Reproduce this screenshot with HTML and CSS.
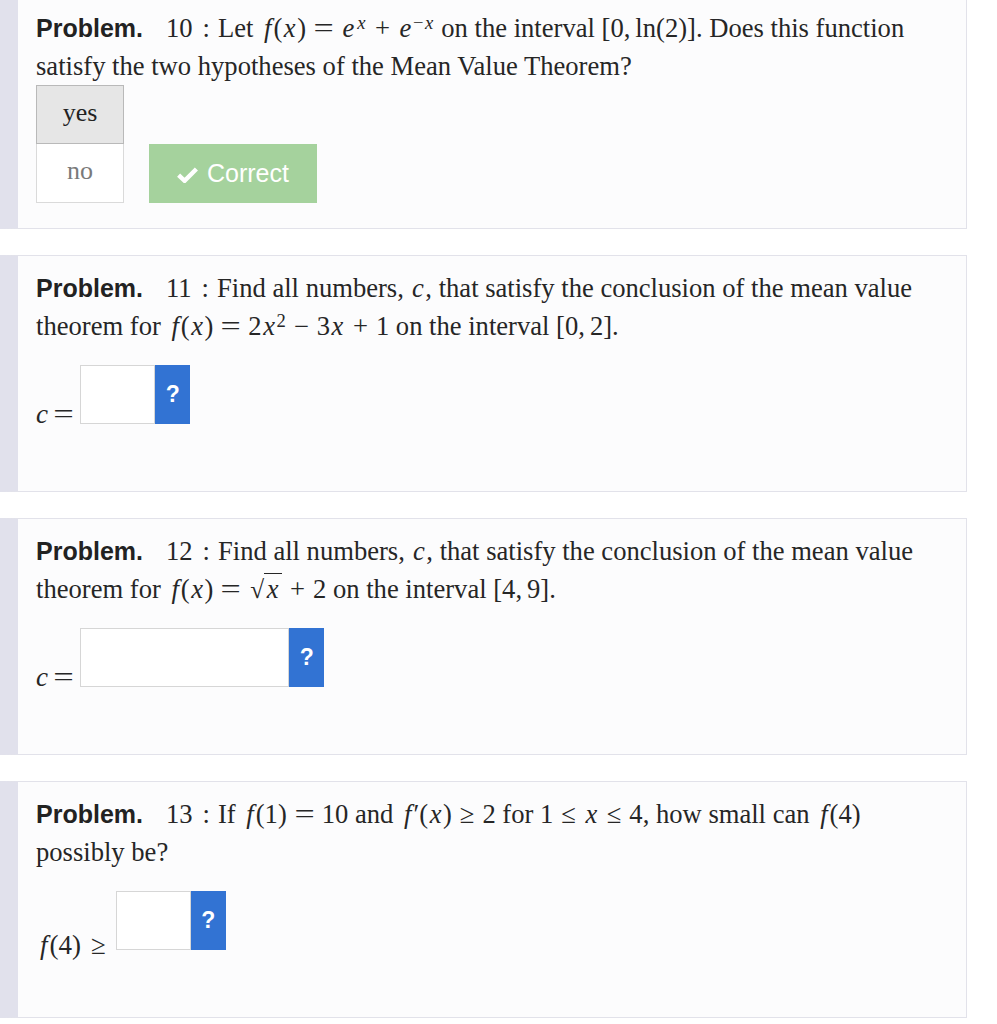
FILE: index.html
```html
<!DOCTYPE html>
<html lang="en">
<head>
<meta charset="utf-8">
<title>Mean Value Theorem problems</title>
<link rel="stylesheet" href="styles.css">
</head>
<body>
<div class="list">
  <section class="card card-first">
    <p class="question"><span class="label">Problem.</span><span class="num">10</span><span class="colon">:</span>Let <i class="f">f</i>(<i>x</i>)<span class="rel eq">=</span><i>e</i><sup><i>x</i></sup><span class="bin">+</span><i>e</i><sup>−<i>x</i></sup> on the interval [0,<span class="thin"></span>ln(2)]. Does this function<br>satisfy the two hypotheses of the Mean Value Theorem?</p>
    <div class="answer answer-choice">
      <div class="choices">
        <div class="choice choice-selected">yes</div>
        <div class="choice">no</div>
      </div>
      <div class="correct">
        <svg class="check" width="21" height="16" viewBox="0 0 21 16" aria-hidden="true"><path d="M1.6 8.2 L7.6 13.8 L19.4 2" fill="none" stroke="#fff" stroke-width="4.4"/></svg>
        <span>Correct</span>
      </div>
    </div>
  </section>

  <section class="card">
    <p class="question"><span class="label">Problem.</span><span class="num">11</span><span class="colon">:</span>Find all numbers, <i>c</i>, that satisfy the conclusion of the mean value<br>theorem for <i class="f">f</i>(<i>x</i>)<span class="rel eq">=</span>2<i>x</i><sup>2</sup><span class="bin">−</span>3<i>x</i><span class="bin">+</span>1 on the interval [0,<span class="thin"></span>2].</p>
    <div class="answer">
      <div class="ans-label"><i class="c">c</i><span class="rel-r eq">=</span></div>
      <div class="input"></div>
      <div class="help">?</div>
    </div>
  </section>

  <section class="card">
    <p class="question"><span class="label">Problem.</span><span class="num">12</span><span class="colon">:</span>Find all numbers, <i>c</i>, that satisfy the conclusion of the mean value<br>theorem for <i class="f">f</i>(<i>x</i>)<span class="rel eq">=</span><span class="sqrt"><span class="radical">√</span><span class="radicand"><i>x</i></span></span><span class="bin">+</span>2 on the interval [4,<span class="thin"></span>9].</p>
    <div class="answer">
      <div class="ans-label"><i class="c">c</i><span class="rel-r eq">=</span></div>
      <div class="input input-wide"></div>
      <div class="help">?</div>
    </div>
  </section>

  <section class="card">
    <p class="question"><span class="label">Problem.</span><span class="num">13</span><span class="colon">:</span>If <i class="f">f</i>(1)<span class="rel eq">=</span>10 and <i class="f">f</i>′(<i>x</i>)<span class="rel">≥</span>2 for 1<span class="rel">≤</span><i>x</i><span class="rel">≤</span>4, how small can <i class="f">f</i>(4)<br>possibly be?</p>
    <div class="answer">
      <div class="ans-label ans-label-low"><i class="f">f</i>(4)<span class="rel-r">≥</span></div>
      <div class="input"></div>
      <div class="help">?</div>
    </div>
  </section>
</div>
</body>
</html>
```

FILE: styles.css
```css
* {
  box-sizing: border-box;
}

body {
  margin: 0;
  background: #ffffff;
  font-family: "Liberation Serif", "Times New Roman", serif;
  color: #262626;
}

.list {
  margin-top: -8px;
  width: 967px;
}

.card {
  height: 237px;
  margin-bottom: 26px;
  background: #fcfcfd;
  border: 1px solid #e2e2ea;
  border-left: 18px solid #e1e1ec;
  padding: 13px 18px 0 18px;
}

.card-first {
  padding-top: 16px;
}

.question {
  margin: 0;
  font-size: 26.6px;
  line-height: 38px;
  white-space: nowrap;
}

.question i,
.ans-label i {
  font-style: italic;
  padding: 0 1.5px;
}

.question i.f,
.ans-label i.f {
  padding: 0 2px 0 4px;
}

.label {
  font-family: "Liberation Sans", Arial, sans-serif;
  font-weight: bold;
  font-size: 25px;
  line-height: 20px;
  color: #222;
}

.num {
  margin-left: 23px;
}

.colon {
  margin: 0 8px 0 10px;
}

.rel {
  margin: 0 8px;
}

.eq {
  display: inline-block;
  transform: scaleX(1.35);
  margin: 0 10px;
}

.bin {
  margin: 0 8px;
}

.thin {
  display: inline-block;
  width: 5px;
}

sup {
  font-size: 0.7em;
  line-height: 0;
  vertical-align: 0.45em;
  margin-left: 0;
}

sup i {
  padding: 0 1px;
}

.sqrt {
  white-space: nowrap;
  margin-left: 2px;
}

.radical {
  font-size: 0.95em;
}

.radicand {
  border-top: 1.5px solid #262626;
  padding: 0 2px 0 1px;
}

.answer {
  display: flex;
  align-items: flex-end;
  margin-top: 20px;
}

.answer-choice {
  margin-top: 0;
}

.choices {
  width: 88px;
  display: flex;
  flex-direction: column;
}

.choice {
  height: 59px;
  display: flex;
  align-items: center;
  justify-content: center;
  background: #ffffff;
  border: 1px solid #dadada;
  border-top: none;
  font-size: 26px;
  color: #7a7a7a;
  padding-bottom: 4px;
}

.choice-selected {
  background: #e6e6e6;
  border: 1px solid #b9b9b9;
  color: #222;
}

.correct {
  width: 168px;
  height: 59px;
  margin-left: 25px;
  background: #a5d29d;
  color: #ffffff;
  display: flex;
  align-items: center;
  justify-content: center;
  gap: 9px;
  font-family: "Liberation Sans", Arial, sans-serif;
  font-size: 25px;
}

.check {
  margin-top: 2px;
}

.ans-label {
  font-size: 27px;
  line-height: 27px;
  margin-right: 6px;
  margin-bottom: -4px;
  white-space: nowrap;
}

.ans-label i.c {
  padding: 0;
}

.ans-label-low {
  margin-bottom: -9px;
  margin-right: 10px;
}

.ans-label .eq {
  margin: 0 3px 0 8px;
}

.rel-r {
  margin-left: 10px;
}

.input {
  width: 75px;
  height: 59px;
  background: #ffffff;
  border: 1px solid #d6d6d6;
}

.input-wide {
  width: 209px;
}

.help {
  width: 35px;
  height: 59px;
  background: #3273d3;
  color: #ffffff;
  display: flex;
  align-items: center;
  justify-content: center;
  font-family: "Liberation Sans", Arial, sans-serif;
  font-weight: bold;
  font-size: 23px;
}
```
